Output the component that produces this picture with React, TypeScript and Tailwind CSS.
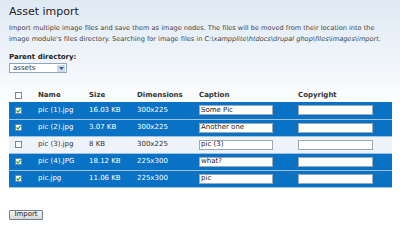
import React from 'react';

type Row = { checked: boolean; name: string; size: string; dims: string; caption: string; dark: boolean };

const rows: Row[] = [
  { checked: true, name: 'pic (1).jpg', size: '16.03 KB', dims: '300x225', caption: 'Some Pic', dark: true },
  { checked: true, name: 'pic (2).jpg', size: '3.07 KB', dims: '300x225', caption: 'Another one', dark: true },
  { checked: false, name: 'pic (3).jpg', size: '8 KB', dims: '300x225', caption: 'pic (3)', dark: false },
  { checked: true, name: 'pic (4).JPG', size: '18.12 KB', dims: '225x300', caption: 'what?', dark: true },
  { checked: true, name: 'pic.jpg', size: '11.06 KB', dims: '225x300', caption: 'pic', dark: true },
];

function Box({ checked }: { checked: boolean }) {
  return (
    <span className="flex h-[7px] w-[7px] items-center justify-center border border-[#7a8a99] bg-white">
      {checked && (
        <svg width="5" height="5" viewBox="0 0 5 5">
          <path d="M0.5 2.5 L2 4 L4.5 0.8" stroke="#21a121" strokeWidth="1.2" fill="none" />
        </svg>
      )}
    </span>
  );
}

export default function App() {
  return (
    <div
      className="h-[226px] w-[400px] overflow-hidden bg-gradient-to-b from-[#dfe9f4] via-white to-white px-[9px] text-[#333]"
      style={{ fontFamily: '"DejaVu Sans", Verdana, sans-serif' }}
    >
      <h1 className="pt-[5px] text-[11px] leading-[14px] text-[#222]">Asset import</h1>
      <p className="mt-[4px] whitespace-nowrap text-[6.6px] leading-[11px] text-[#444]">
        Import multiple image files and save them as image nodes. The files will be moved from their location into the
        <br />
        image module's files directory. Searching for image files in{' '}
        <em>C:\xampplite\htdocs\drupal ghop\files\images\import</em>.
      </p>
      <div className="mt-[8px] text-[7px] font-bold leading-[9px] text-[#222]">Parent directory:</div>
      <div className="mt-[1px] flex h-[10px] w-[58px] items-center justify-between border border-[#8ea6bf] bg-white pl-[3px] pr-[1px] text-[7px] text-[#333]">
        <span>assets</span>
        <span className="flex h-[7px] w-[8px] items-center justify-center bg-[#c9d9ee]">
          <svg width="5" height="3" viewBox="0 0 5 3">
            <path d="M0 0 L5 0 L2.5 3 Z" fill="#3a5a8a" />
          </svg>
        </span>
      </div>

      <table className="mt-[15px] w-[383px] border-collapse text-[7px]">
        <thead>
          <tr className="h-[14px] text-left font-bold text-[#333]">
            <th className="w-[29px] pl-[6px] align-middle"><Box checked={false} /></th>
            <th className="w-[51px] font-bold">Name</th>
            <th className="w-[48px] font-bold">Size</th>
            <th className="w-[62px] font-bold">Dimensions</th>
            <th className="w-[99px] font-bold">Caption</th>
            <th className="font-bold">Copyright</th>
          </tr>
        </thead>
        <tbody>
          {rows.map((r) => (
            <tr
              key={r.name}
              className={`h-[17px] border-b border-[#9cc3e6] ${r.dark ? 'bg-[#0a72c4] text-white' : 'bg-[#edf3f9] text-[#333]'}`}
            >
              <td className="pl-[6px] align-middle"><Box checked={r.checked} /></td>
              <td>{r.name}</td>
              <td>{r.size}</td>
              <td>{r.dims}</td>
              <td>
                <div className="flex h-[10px] w-[74px] items-center border border-[#9aa9b8] bg-white pl-[1px] text-[7px] text-[#222]">
                  {r.caption}
                </div>
              </td>
              <td>
                <div className="h-[10px] w-[75px] border border-[#9aa9b8] bg-white" />
              </td>
            </tr>
          ))}
        </tbody>
      </table>

      <button className="mt-[22px] flex h-[10px] w-[34px] items-center justify-center rounded-[1px] border border-[#6f7f8f] bg-gradient-to-b from-[#f4f4f4] to-[#d8d8d8] text-[7px] text-[#222]">
        Import
      </button>
    </div>
  );
}
